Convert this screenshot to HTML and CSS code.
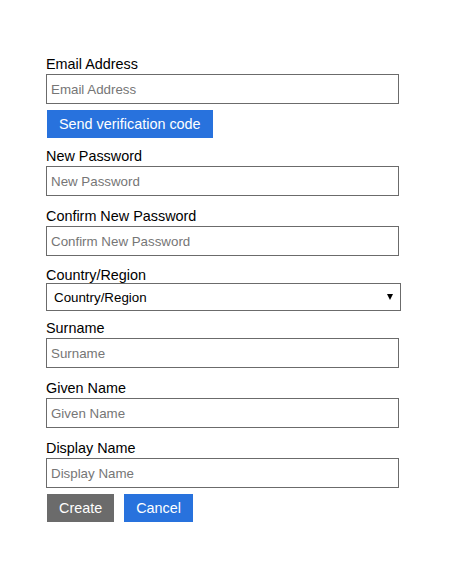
FILE: index.html
```html
<!DOCTYPE html>
<html lang="en">
<head>
<meta charset="utf-8">
<title>Sign up</title>
<link rel="stylesheet" href="styles.css">
</head>
<body>
<form class="form">
  <label class="field-label" for="email">Email Address</label>
  <input class="text-input text-input--tight" id="email" type="email" placeholder="Email Address">
  <button type="button" class="btn btn--blue btn--verify">Send verification code</button>

  <label class="field-label" for="newPassword">New Password</label>
  <input class="text-input" id="newPassword" type="password" placeholder="New Password">

  <label class="field-label" for="reenterPassword">Confirm New Password</label>
  <input class="text-input text-input--before-select" id="reenterPassword" type="password" placeholder="Confirm New Password">

  <label class="field-label field-label--select" for="country">Country/Region</label>
  <div class="select-wrap">
    <select class="select" id="country">
      <option>Country/Region</option>
    </select>
  </div>

  <label class="field-label" for="surname">Surname</label>
  <input class="text-input" id="surname" type="text" placeholder="Surname">

  <label class="field-label" for="givenName">Given Name</label>
  <input class="text-input" id="givenName" type="text" placeholder="Given Name">

  <label class="field-label" for="displayName">Display Name</label>
  <input class="text-input text-input--last" id="displayName" type="text" placeholder="Display Name">

  <div class="actions">
    <button type="button" class="btn btn--gray">Create</button>
    <button type="button" class="btn btn--blue">Cancel</button>
  </div>
</form>
</body>
</html>
```

FILE: styles.css
```css
* {
  box-sizing: border-box;
}

html, body {
  margin: 0;
  padding: 0;
  background: #fff;
}

body {
  font-family: "Liberation Sans", Arial, sans-serif;
  color: #000;
}

.form {
  display: flex;
  flex-direction: column;
  align-items: flex-start;
  padding: 56px 0 0 46px;
}

.field-label {
  display: block;
  font-size: 14.4px;
  line-height: 16px;
  margin-bottom: 2px;
  color: #000;
}

.field-label--select {
  margin-bottom: 0;
}

.text-input {
  display: block;
  width: 353px;
  height: 30px;
  margin: 0 0 12px 0;
  padding: 0 4px;
  border: 1px solid #6b6b6b;
  border-radius: 0;
  font-family: "Liberation Sans", Arial, sans-serif;
  font-size: 13.333px;
  color: #000;
  background: #fff;
  outline: none;
}

.text-input::placeholder {
  color: #767676;
  opacity: 1;
}

.text-input--tight {
  margin-bottom: 6px;
}

.text-input--before-select {
  margin-bottom: 11px;
}

.text-input--last {
  margin-bottom: 6px;
}

.select-wrap {
  position: relative;
  width: 355px;
  margin-bottom: 9px;
}

.select-wrap::after {
  content: "";
  position: absolute;
  right: 8px;
  top: 11px;
  width: 0;
  height: 0;
  border-left: 3px solid transparent;
  border-right: 3px solid transparent;
  border-top: 6px solid #000;
  pointer-events: none;
}

.select {
  display: block;
  width: 355px;
  height: 28px;
  margin: 0;
  padding: 0 24px 0 7px;
  border: 1px solid #6b6b6b;
  border-radius: 0;
  font-family: "Liberation Sans", Arial, sans-serif;
  font-size: 13.333px;
  color: #000;
  background: #fff;
  -webkit-appearance: none;
  appearance: none;
  outline: none;
}

.btn {
  display: inline-block;
  height: 28px;
  margin: 0;
  padding: 0 12px;
  border: none;
  border-radius: 0;
  font-family: "Liberation Sans", Arial, sans-serif;
  font-size: 14.4px;
  line-height: 28px;
  color: #fff;
  cursor: pointer;
}

.btn--blue {
  background: #2872dd;
}

.btn--gray {
  background: #6b6b6b;
}

.btn--verify {
  margin-left: 1px;
  margin-bottom: 10px;
}

.actions {
  display: flex;
  gap: 10px;
  margin-left: 1px;
}
```
